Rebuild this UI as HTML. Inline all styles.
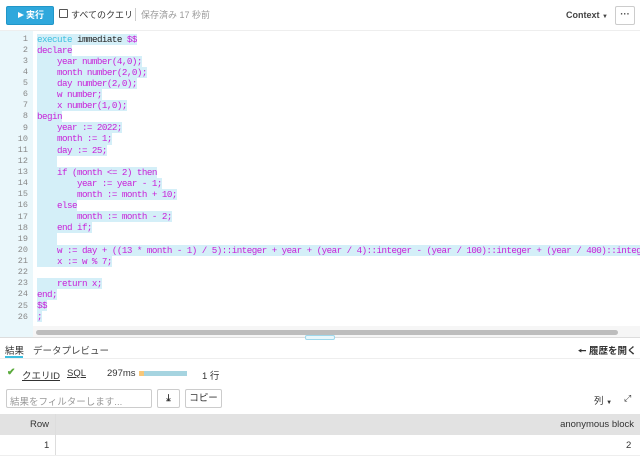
<!DOCTYPE html>
<html><head><meta charset="utf-8"><style>
*{margin:0;padding:0;box-sizing:border-box}
body{width:640px;height:460px;overflow:hidden;background:#fff;font-family:"Liberation Sans","Noto Sans CJK JP",sans-serif;font-size:9.5px;color:#333;position:relative}
.abs{position:absolute}
.run{left:6px;top:6px;width:48px;height:19px;background:#2fa8dc;border:1px solid #2196c8;border-radius:2px;color:#fff;font-weight:bold;font-size:9px;line-height:17px;padding-left:10px}
.run:before{content:"";position:absolute;left:11px;top:5px;border-left:6px solid #fff;border-top:3.5px solid transparent;border-bottom:3.5px solid transparent}
.run span{margin-left:9px}
.gut{left:0;top:31px;width:33px;height:306px;background:#eaf7fb}
.code{left:37px;top:33.5px;width:603px;overflow:hidden;font-family:"Liberation Mono",monospace;font-size:9.2px;letter-spacing:-0.52px;color:#c81ed8}
.code div{height:11.12px;line-height:11.12px;white-space:nowrap}
.code span.s{display:inline-block;height:11.12px;background:#d4eff8;vertical-align:top;white-space:pre}
.nums{left:0;top:33.5px;width:28px;text-align:right;font-family:"Liberation Mono",monospace;font-size:8.5px;line-height:11.12px;color:#888;white-space:pre}
.btn{border:1px solid #ccc;border-radius:2px;background:#fff}
u{text-decoration:underline}
</style></head><body>
<div class="abs run"><span>実行</span></div>
<div class="abs" style="left:59px;top:9px;width:9px;height:9px;border:1px solid #555;border-radius:1px"></div>
<div class="abs" style="left:71px;top:8px;color:#333;font-size:9px">すべてのクエリ</div>
<div class="abs" style="left:135px;top:8px;width:1px;height:13px;background:#ccc"></div>
<div class="abs" style="left:141px;top:8px;color:#999;font-size:9px">保存済み 17 秒前</div>
<div class="abs" style="left:566px;top:10px;font-weight:bold;color:#444;font-size:9px">Context <span style="font-size:6px">▼</span></div>
<div class="abs btn" style="left:615px;top:6px;width:20px;height:19px;text-align:center;line-height:15px;font-weight:bold;color:#444">···</div>
<div class="abs" style="left:0;top:30px;width:640px;height:1px;background:#eee"></div>
<div class="abs gut"></div>
<div class="abs nums">1
2
3
4
5
6
7
8
9
10
11
12
13
14
15
16
17
18
19
20
21
22
23
24
25
26</div>
<div class="abs code"><div><span class="s"><span style="color:#3cbfe0">execute</span> <span style="color:#222">immediate</span> $$</span></div><div><span class="s">declare</span></div><div><span class="s">    year number(4,0);</span></div><div><span class="s">    month number(2,0);</span></div><div><span class="s">    day number(2,0);</span></div><div><span class="s">    w number;</span></div><div><span class="s">    x number(1,0);</span></div><div><span class="s">begin</span></div><div><span class="s">    year := 2022;</span></div><div><span class="s">    month := 1;</span></div><div><span class="s">    day := 25;</span></div><div><span class="s">    </span></div><div><span class="s">    if (month &lt;= 2) then</span></div><div><span class="s">        year := year - 1;</span></div><div><span class="s">        month := month + 10;</span></div><div><span class="s">    else</span></div><div><span class="s">        month := month - 2;</span></div><div><span class="s">    end if;</span></div><div><span class="s">    </span></div><div><span class="s">    w := day + ((13 * month - 1) / 5)::integer + year + (year / 4)::integer - (year / 100)::integer + (year / 400)::integer;</span></div><div><span class="s">    x := w % 7;</span></div><div></div><div><span class="s">    return x;</span></div><div><span class="s">end;</span></div><div><span class="s">$$</span></div><div><span class="s">;</span></div></div>
<div class="abs" style="left:33px;top:326px;width:607px;height:11px;background:#f6f6f6"></div>
<div class="abs" style="left:36px;top:330px;width:582px;height:5px;background:#bdbdbd;border-radius:3px"></div>
<div class="abs" style="left:0;top:337px;width:640px;height:1px;background:#ddd"></div>
<div class="abs" style="left:305px;top:335px;width:30px;height:5px;border:1px solid #9fd8ec;background:#eaf7fb;border-radius:2px"></div>
<div class="abs" style="left:5px;top:343px;color:#333">結果</div>
<div class="abs" style="left:5px;top:356px;width:18px;height:2px;background:#3cbfe0"></div>
<div class="abs" style="left:33px;top:343px;color:#444">データプレビュー</div>
<div class="abs" style="left:578px;top:343px;color:#333;font-weight:bold">🠔 履歴を開く</div>
<div class="abs" style="left:0;top:358px;width:640px;height:1px;background:#eee"></div>
<div class="abs" style="left:7px;top:367px;color:#5aaa3c;font-weight:bold;font-size:10px">✔</div>
<div class="abs" style="left:22px;top:368px"><u>クエリID</u></div>
<div class="abs" style="left:67px;top:368px"><u>SQL</u></div>
<div class="abs" style="left:107px;top:368px">297ms</div>
<div class="abs" style="left:139px;top:371px;width:5px;height:5px;background:#f7c77a"></div>
<div class="abs" style="left:144px;top:371px;width:43px;height:5px;background:#a6d4e0"></div>
<div class="abs" style="left:202px;top:368px">1 行</div>
<div class="abs" style="left:6px;top:389px;width:146px;height:19px;border:1px solid #ccc;border-radius:2px;color:#999;padding:4px 0 0 3px">結果をフィルターします...</div>
<div class="abs btn" style="left:157px;top:389px;width:23px;height:19px;text-align:center;line-height:17px;font-weight:bold">⤓</div>
<div class="abs btn" style="left:185px;top:389px;width:37px;height:19px;text-align:center;line-height:17px">コピー</div>
<div class="abs" style="left:594px;top:393px">列 <span style="font-size:6px">▼</span></div>
<div class="abs" style="left:624px;top:393px;font-size:9px">⤢</div>
<div class="abs" style="left:0;top:414px;width:640px;height:21px;background:#e2e2e2"></div>
<div class="abs" style="left:55px;top:414px;width:1px;height:42px;background:#ddd"></div>
<div class="abs" style="left:30px;top:419px">Row</div>
<div class="abs" style="left:540px;top:419px;width:94px;text-align:right">anonymous block</div>
<div class="abs" style="left:44px;top:440px">1</div>
<div class="abs" style="left:626px;top:440px">2</div>
<div class="abs" style="left:0;top:455px;width:640px;height:1px;background:#eee"></div>
</body></html>
